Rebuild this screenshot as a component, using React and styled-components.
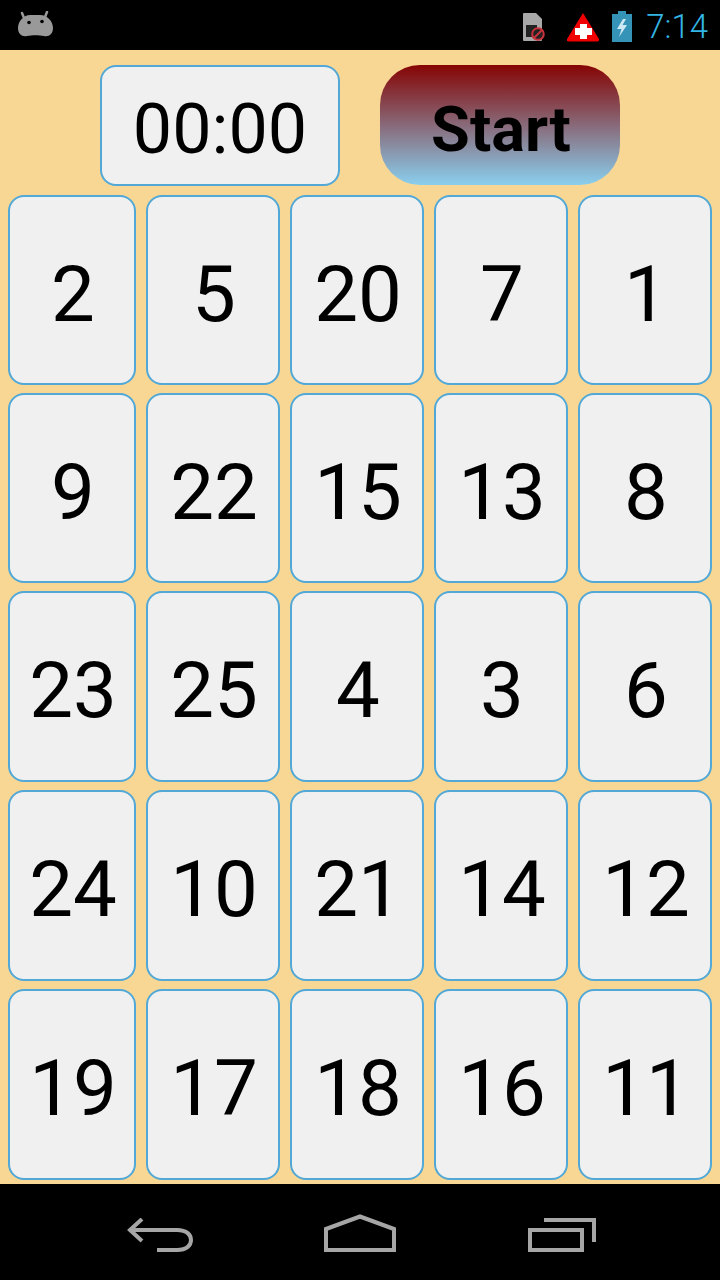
import React from 'react'
import styled, { createGlobalStyle } from 'styled-components'

const GlobalStyle = createGlobalStyle`
  html, body {
    margin: 0;
    padding: 0;
    background: #000;
  }
`

const Screen = styled.div`
  width: 720px;
  height: 1280px;
  display: flex;
  flex-direction: column;
  font-family: Roboto, "Liberation Sans", sans-serif;
  overflow: hidden;
`

const StatusBar = styled.div`
  height: 50px;
  flex: none;
  background: #000;
  display: flex;
  align-items: center;
  padding: 0 12px 0 17px;
`

const StatusIcons = styled.div`
  margin-left: auto;
  display: flex;
  align-items: center;
  padding-top: 3px;
`

const Clock = styled.span`
  font-size: 33px;
  font-weight: 300;
  color: #33b5e5;
  margin-left: 14px;
  line-height: 44px;
`

const Board = styled.main`
  flex: 1;
  background: #f8d794;
  padding: 15px 8px 4px;
  display: flex;
  flex-direction: column;
  gap: 10px;
  min-height: 0;
`

const Controls = styled.div`
  display: flex;
  justify-content: center;
  align-items: flex-start;
  gap: 40px;
  height: 120px;
  flex: none;
`

const Timer = styled.div`
  width: 240px;
  height: 121px;
  box-sizing: border-box;
  border: 2px solid #52a8d6;
  border-radius: 16px;
  background: #f0f0f0;
  padding-top: 7px;
  display: flex;
  align-items: center;
  justify-content: center;
  font-size: 70px;
  color: #000;
`

const StartButton = styled.button`
  width: 240px;
  height: 120px;
  border: none;
  border-radius: 40px;
  padding: 8px 0 0 2px;
  background: linear-gradient(180deg, #860404 0%, #8acfee 100%);
  font-family: inherit;
  font-size: 63px;
  font-weight: 700;
  color: #000;
`

const Grid = styled.div`
  flex: 1;
  display: grid;
  grid-template-columns: 128px repeat(4, 134px);
  grid-template-rows: 190px 190px 191px 191px 191px;
  column-gap: 10px;
  row-gap: 8px;
  min-height: 0;
`

const Tile = styled.button`
  box-sizing: border-box;
  border: 2px solid #52a8d6;
  border-radius: 16px;
  background: #f0f0f0;
  padding: 8px 0 0 2px;
  font-family: inherit;
  font-size: 78px;
  font-weight: 400;
  color: #000;
`

const NavBar = styled.nav`
  height: 96px;
  flex: none;
  background: #000;
  display: flex;
  align-items: flex-end;
  gap: 131px;
  padding: 0 0 28px 127px;
  box-sizing: border-box;
`

const numbers = [
  2, 5, 20, 7, 1,
  9, 22, 15, 13, 8,
  23, 25, 4, 3, 6,
  24, 10, 21, 14, 12,
  19, 17, 18, 16, 11,
]

function AndroidHead() {
  return (
    <svg width="38" height="28" viewBox="0 0 38 28">
      <path d="M7 7 L5 2 M28 6 L30 1" stroke="#999" strokeWidth="2.5" strokeLinecap="round" />
      <path
        d="M1 17 C1 10 7 4 13 4 L23 4 C30 4 36 10 36 17 C36 23 32 26 27 25 C22 24 15 24 10 25 C5 26 1 23 1 17 Z"
        fill="#999"
      />
      <circle cx="12" cy="11.5" r="1.8" fill="#000" />
      <circle cx="25" cy="10.5" r="1.8" fill="#000" />
    </svg>
  )
}

function SimIcon() {
  return (
    <svg width="24" height="30" viewBox="0 0 24 30">
      <path d="M0 2 Q0 1 1 1 L13 1 L19 7 L19 28 Q19 29 18 29 L1 29 Q0 29 0 28 Z" fill="#a8a8a8" />
      <rect x="3" y="13" width="11" height="12" fill="#222" />
      <circle cx="15" cy="22" r="5.8" fill="#222" stroke="#c8323c" strokeWidth="2" />
      <path d="M11 26 L19 18" stroke="#c8323c" strokeWidth="2" />
    </svg>
  )
}

function AlertIcon() {
  return (
    <svg width="34" height="30" viewBox="0 0 34 30" style={{ marginLeft: 19 }}>
      <path d="M17 1 L33 27 Q33.5 29.5 31 29.5 L3 29.5 Q0.5 29.5 1 27 Z" fill="#f00000" />
      <path d="M14 12 H21 V16 H26 V23 H21 V27 H14 V23 H9 V16 H14 Z" fill="#fff" />
    </svg>
  )
}

function BatteryIcon() {
  return (
    <svg width="20" height="31" viewBox="0 0 20 31" style={{ marginLeft: 12 }}>
      <path d="M6 0 H14 V3 H20 V31 H0 V3 H6 Z" fill="#3593b8" />
      <path d="M11 8 L5 18 H9.5 L7 26 L15 14 H10.5 L14 8 Z" fill="#cfe9f4" />
    </svg>
  )
}

function BackIcon() {
  return (
    <svg width="66" height="34" viewBox="0 0 66 34" fill="none" stroke="#a6a6a6" strokeWidth="4">
      <path d="M15 1 L3 12 L15 23" />
      <path d="M3 12 H50 C60 12 64 17 64 22 C64 27 60 32 50 32 H30" />
    </svg>
  )
}

function HomeIcon() {
  return (
    <svg width="73" height="38" viewBox="0 0 73 38" fill="none" stroke="#a6a6a6" strokeWidth="4">
      <path d="M2 15 L36 2.5 L70 15 V36 H2 Z" />
    </svg>
  )
}

function RecentIcon() {
  return (
    <svg width="68" height="34" viewBox="0 0 68 34" fill="none" stroke="#a6a6a6" strokeWidth="4">
      <rect x="2" y="12" width="52" height="20" />
      <path d="M16 2 H66 V24" />
    </svg>
  )
}

export default function App() {
  return (
    <Screen>
      <GlobalStyle />
      <StatusBar>
        <AndroidHead />
        <StatusIcons>
          <SimIcon />
          <AlertIcon />
          <BatteryIcon />
          <Clock>7:14</Clock>
        </StatusIcons>
      </StatusBar>
      <Board>
        <Controls>
          <Timer>00:00</Timer>
          <StartButton>Start</StartButton>
        </Controls>
        <Grid>
          {numbers.map((n) => (
            <Tile key={n}>{n}</Tile>
          ))}
        </Grid>
      </Board>
      <NavBar>
        <BackIcon />
        <HomeIcon />
        <RecentIcon />
      </NavBar>
    </Screen>
  )
}
